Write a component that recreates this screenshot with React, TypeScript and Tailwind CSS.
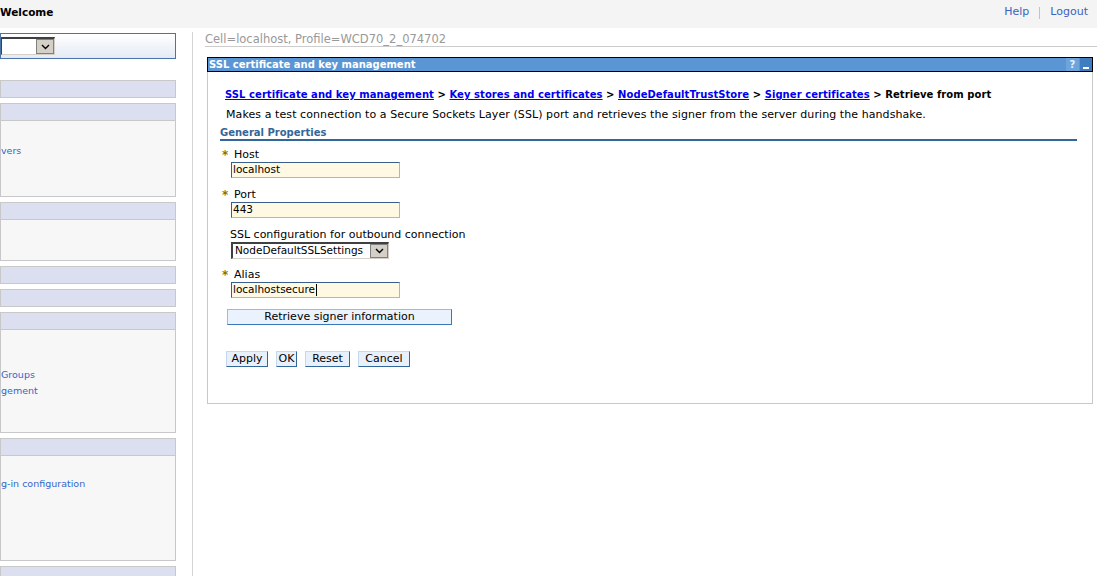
import React from "react";

const font = "font-['DejaVu_Sans',Verdana,sans-serif]";

/* ================= SIDEBAR ================= */
function NavBar() {
  return <div className="h-[18px] border border-[#c8c8c8] bg-[#dcdff0]" />;
}

function NavSection({ h, children }: { h: number; children?: React.ReactNode }) {
  return (
    <div>
      <NavBar />
      <div
        className="border-x border-b border-[#c8c8c8] bg-[#f7f7f7] text-[9.5px] text-[#3366cc]"
        style={{ height: h }}
      >
        {children}
      </div>
    </div>
  );
}

function Chevron() {
  return (
    <svg width="9" height="6" viewBox="0 0 9 6">
      <path d="M1 1l3.5 3.5L8 1" fill="none" stroke="#000" strokeWidth="1.4" />
    </svg>
  );
}

function Sidebar() {
  return (
    <div className="mt-[4px] h-[600px] w-[193px] shrink-0 border-r border-[#d4d4d4] pt-[1px]">
      <div className="w-[176px]">
        {/* view selector */}
        <div className="h-[26px] border border-[#4a74a8] bg-gradient-to-b from-white to-[#e4eaf5] pt-[3px]">
          <div className="flex h-[18px] w-[54px] border-t-2 border-l border-[#404040] border-b border-r border-b-[#d4d0c8] border-r-[#d4d0c8] bg-white">
            <div className="ml-auto flex w-[18px] items-center justify-center border border-[#808080] bg-[#d4d0c8]">
              <Chevron />
            </div>
          </div>
        </div>

        <div className="mt-[21px] flex flex-col gap-[5px]">
          <NavBar />
          <NavSection h={76}>
            <div className="pt-[24px] leading-[12px]">vers</div>
          </NavSection>
          <NavSection h={41} />
          <NavBar />
          <NavBar />
          <NavSection h={103}>
            <div className="pt-[37px] leading-[16px]">
              <div>Groups</div>
              <div>gement</div>
            </div>
          </NavSection>
          <NavSection h={105}>
            <div className="pt-[22px] leading-[12px]">g-in configuration</div>
          </NavSection>
          <NavBar />
        </div>
      </div>
    </div>
  );
}

/* ================= FORM BITS ================= */
function Label({ text, required }: { text: string; required?: boolean }) {
  return (
    <div className="flex h-[12px] items-center text-[11px] leading-[12px] text-black">
      {required ? (
        <span className="ml-[14px] w-[12px] text-[12px] font-bold leading-[12px] text-[#8a7400]">*</span>
      ) : (
        <span className="ml-[22px]" />
      )}
      {text}
    </div>
  );
}

function Field({ value, cursor }: { value: string; cursor?: boolean }) {
  return (
    <div className="ml-[23px] mt-[1px] flex h-[16px] w-[169px] items-center border border-t-[#3a5f8a] border-l-[#3a5f8a] border-b-[#9dbad6] border-r-[#9dbad6] bg-[#fff8e2] pl-[1px] text-[10.5px] text-black">
      {value}
      {cursor && <span className="ml-[1px] h-[12px] w-px bg-black" />}
    </div>
  );
}

function Btn({ label, w }: { label: string; w: number }) {
  return (
    <div
      className="flex h-[16px] items-center justify-center border border-t-[#c4d8ee] border-l-[#c4d8ee] border-b-[#336699] border-r-[#336699] bg-[#e8f0fb] text-[11px] text-black"
      style={{ width: w }}
    >
      {label}
    </div>
  );
}

/* ================= PANEL ================= */
function Panel() {
  const link = "font-bold text-[#0000ee] underline";
  return (
    <div className="ml-[14px] mr-[4px] mt-[10px]">
      {/* title bar */}
      <div className="flex h-[15px] items-center border border-black bg-[#5a96d4] pl-[1px]">
        <span className="text-[10px] font-bold leading-[12px] text-white">
          SSL certificate and key management
        </span>
        <div className="ml-auto flex h-full">
          <div className="flex w-[13px] items-center justify-center bg-[#6ea4dc] text-[10px] font-bold text-[#e8f0fa]">?</div>
          <div className="ml-px flex w-[12px] items-end justify-center bg-[#3f7cc0] pb-[2px]">
            <span className="h-[2px] w-[6px] bg-white" />
          </div>
        </div>
      </div>

      {/* body */}
      <div className="h-[332px] border-x border-b border-[#c8c8c8]">
        <div className="pl-[17px] pt-[17px] leading-[12px]">
          <div className="text-[10px] font-bold tracking-[0.06px] text-black">
            <span className={link}>SSL certificate and key management</span> &gt;{" "}
            <span className={link}>Key stores and certificates</span> &gt;{" "}
            <span className={link}>NodeDefaultTrustStore</span> &gt;{" "}
            <span className={link}>Signer certificates</span> &gt; Retrieve from port
          </div>
          <div className="mt-[8px] pl-px text-[11px] tracking-[0.08px] text-black">
            Makes a test connection to a Secure Sockets Layer (SSL) port and retrieves the signer from the server during the handshake.
          </div>
        </div>

        <div className="ml-[12px] mr-[15px] mt-[6px] border-b-2 border-[#336699] text-[10px] font-bold leading-[12px] text-[#336699]">
          General Properties
        </div>

        <div className="mt-[8px]">
          <Label text="Host" required />
          <Field value="localhost" />

          <div className="mt-[11px]" />
          <Label text="Port" required />
          <Field value="443" />

          <div className="mt-[11px]" />
          <Label text="SSL configuration for outbound connection" />
          <div className="ml-[23px] mt-[1px] flex h-[17px] w-[158px] border-t-2 border-l-2 border-[#404040] border-b border-r border-b-[#d4d0c8] border-r-[#d4d0c8] bg-white">
            <span className="flex flex-1 items-center pl-[2px] text-[10.5px] text-black">
              NodeDefaultSSLSettings
            </span>
            <div className="flex w-[18px] items-center justify-center border border-[#808080] bg-[#d4d0c8]">
              <Chevron />
            </div>
          </div>

          <div className="mt-[10px]" />
          <Label text="Alias" required />
          <Field value="localhostsecure" cursor />

          <div className="ml-[19px] mt-[11px] flex h-[16px] w-[225px] items-center justify-center border border-t-[#5fd4f4] border-l-[#5fd4f4] border-b-[#3b78b8] border-r-[#3b78b8] bg-[#eaf2fd] text-[11px] text-black">
            Retrieve signer information
          </div>

          <div className="ml-[18px] mt-[26px] flex gap-[8px]">
            <Btn label="Apply" w={42} />
            <Btn label="OK" w={21} />
            <Btn label="Reset" w={45} />
            <Btn label="Cancel" w={52} />
          </div>
        </div>
      </div>
    </div>
  );
}

/* ================= APP ================= */
export default function App() {
  return (
    <div className={`${font} h-[576px] w-[1097px] overflow-hidden bg-white`}>
      {/* HEADER */}
      <div className="flex h-[28px] items-center bg-[#f4f4f4] pb-[3px]">
        <span className="text-[10.5px] font-bold text-black">Welcome</span>
        <div className="ml-auto mr-[9px] flex items-center text-[11px] text-[#3a62bf]">
          <span>Help</span>
          <span className="mx-[10px] h-[12px] w-px bg-[#b8c4dc]" />
          <span>Logout</span>
        </div>
      </div>

      <div className="flex">
        <Sidebar />

        <div className="flex-1">
          <div className="ml-[12px] mt-[5px] border-b border-[#cccccc] text-[11.5px] leading-[13px] text-[#999999]">
            Cell=localhost, Profile=WCD70_2_074702
          </div>
          <Panel />
        </div>
      </div>
    </div>
  );
}
